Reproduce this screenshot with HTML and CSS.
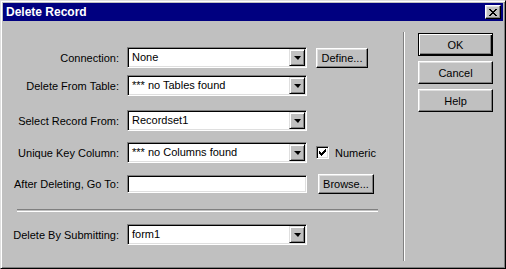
FILE: index.html
```html
<!DOCTYPE html>
<html lang="en">
<head>
    <meta charset="UTF-8">
    <title>Delete Record</title>
    <link rel="stylesheet" href="styles.css">
</head>
<body>

<div class="window">
    <div class="titlebar">
        <span class="title">Delete Record</span>
        <span class="close">
            <svg width="8" height="7" viewBox="0 0 8 7" shape-rendering="crispEdges">
                <path d="M0 0h2v1h1v1h2v-1h1v-1h2v1h-1v1h-1v1h-1v1h1v1h1v1h1v1h-2v-1h-1v-1h-2v1h-1v1h-2v-1h1v-1h1v-1h1v-1h-1v-1h-1v-1h-1z" fill="#000"/>
            </svg>
        </span>
    </div>

    <div class="content">
        <div class="form">
            <div class="row">
                <label class="label">Connection:</label>
                <div class="combo"><span class="value">None</span><span class="drop"><i class="arrow"></i></span></div>
                <button class="btn btn-define">Define...</button>
            </div>
            <div class="row row-2">
                <label class="label">Delete From Table:</label>
                <div class="combo"><span class="value">*** no Tables found</span><span class="drop"><i class="arrow"></i></span></div>
            </div>
            <div class="row row-3">
                <label class="label">Select Record From:</label>
                <div class="combo"><span class="value">Recordset1</span><span class="drop"><i class="arrow"></i></span></div>
            </div>
            <div class="row row-4">
                <label class="label">Unique Key Column:</label>
                <div class="combo"><span class="value">*** no Columns found</span><span class="drop"><i class="arrow"></i></span></div>
                <span class="checkbox">
                    <svg width="7" height="7" viewBox="0 0 7 7" shape-rendering="crispEdges">
                        <path d="M6 0h1v3h-1v1h-1v1h-1v1h-1v1h-1v-1h-1v-1h-1v-3h1v1h1v1h1v-1h1v-1h1v-1h1z" fill="#000"/>
                    </svg>
                </span>
                <span class="check-label">Numeric</span>
            </div>
            <div class="row row-5">
                <label class="label">After Deleting, Go To:</label>
                <div class="field"></div>
                <button class="btn btn-browse">Browse...</button>
            </div>
            <div class="hsep"></div>
            <div class="row row-6">
                <label class="label">Delete By Submitting:</label>
                <div class="combo"><span class="value">form1</span><span class="drop"><i class="arrow"></i></span></div>
            </div>
        </div>

        <div class="vsep"></div>

        <div class="actions">
            <button class="btn btn-side btn-default">OK</button>
            <button class="btn btn-side">Cancel</button>
            <button class="btn btn-side">Help</button>
        </div>
    </div>
</div>

</body>
</html>
```

FILE: styles.css
```css
body {
    margin: 0;
    font-family: 'Liberation Sans', Arial, sans-serif;
    font-size: 11px;
    color: #000;
    background: #c0c0c0;
}

.window {
    box-sizing: border-box;
    width: 506px;
    height: 269px;
    padding: 2px;
    background: #c0c0c0;
    border: 1px solid;
    border-color: #dfdfdf #000 #000 #dfdfdf;
    box-shadow: inset 1px 1px #fff, inset -1px -1px #808080;
    display: flex;
    flex-direction: column;
}

.titlebar {
    height: 18px;
    background: #000080;
    display: flex;
    align-items: center;
    justify-content: space-between;
    padding: 0 2px 0 3px;
    flex-shrink: 0;
}

.title {
    color: #fff;
    font-weight: bold;
    font-size: 12px;
}

.close {
    box-sizing: border-box;
    width: 16px;
    height: 14px;
    background: #c0c0c0;
    border: 1px solid;
    border-color: #fff #000 #000 #fff;
    box-shadow: inset -1px -1px #808080, inset 1px 1px #dfdfdf;
    display: flex;
    align-items: center;
    justify-content: center;
}

.close svg {
    display: block;
    margin-left: -1px;
}

.content {
    flex: 1;
    display: flex;
}

.form {
    width: 400px;
    padding-top: 26px;
    display: flex;
    flex-direction: column;
}

.row {
    height: 21px;
    display: flex;
    align-items: center;
}

.row-2 { margin-top: 7px; }
.row-3 { margin-top: 14px; }
.row-4 { margin-top: 11px; }
.row-5 { margin-top: 11px; height: 20px; }
.row-6 { margin-top: 12px; }

.label {
    width: 116px;
    margin-right: 8px;
    text-align: right;
    white-space: nowrap;
}

.combo,
.field {
    box-sizing: border-box;
    width: 180px;
    background: #fff;
    border: 1px solid;
    border-color: #808080 #fff #fff #808080;
    box-shadow: inset 1px 1px #000, inset -1px -1px #dfdfdf;
}

.combo {
    height: 21px;
    padding: 1px;
    display: flex;
    align-items: stretch;
}

.field {
    height: 18px;
}

.value {
    flex: 1;
    padding-left: 3px;
    line-height: 17px;
    white-space: nowrap;
}

.drop {
    box-sizing: border-box;
    width: 16px;
    background: #c0c0c0;
    border: 1px solid;
    border-color: #dfdfdf #000 #000 #dfdfdf;
    box-shadow: inset 1px 1px #fff, inset -1px -1px #808080;
    display: flex;
    align-items: center;
    justify-content: center;
}

.arrow {
    width: 0;
    height: 0;
    border-left: 4px solid transparent;
    border-right: 3px solid transparent;
    border-top: 4px solid #000;
}

.btn {
    box-sizing: border-box;
    font-family: inherit;
    font-size: 11px;
    color: #000;
    background: #c0c0c0;
    padding: 0;
    border: 1px solid;
    border-color: #fff #000 #000 #fff;
    box-shadow: inset -1px -1px #808080, inset 1px 1px #dfdfdf;
}

.btn-define {
    width: 52px;
    height: 20px;
    margin-left: 9px;
}

.btn-browse {
    width: 56px;
    height: 20px;
    margin-left: 11px;
}

.checkbox {
    box-sizing: border-box;
    width: 13px;
    height: 13px;
    margin-left: 9px;
    background: #fff;
    border: 1px solid;
    border-color: #808080 #fff #fff #808080;
    box-shadow: inset 1px 1px #000, inset -1px -1px #dfdfdf;
    display: flex;
    align-items: center;
    justify-content: center;
}

.checkbox svg {
    display: block;
}

.check-label {
    margin-left: 6px;
}

.hsep {
    width: 361px;
    height: 1px;
    margin: 15px 0 0 14px;
    border-top: 1px solid #808080;
    border-bottom: 1px solid #fff;
}

.vsep {
    width: 0;
    margin: 11px 0 5px;
    border-left: 1px solid #808080;
    border-right: 1px solid #fff;
}

.actions {
    padding: 12px 0 0 13px;
    display: flex;
    flex-direction: column;
    gap: 5px;
}

.btn-side {
    width: 75px;
    height: 23px;
}

.btn-default {
    border: 1px solid #000;
    box-shadow: inset 1px 1px #fff, inset -1px -1px #000, inset -2px -2px #808080;
}
```
